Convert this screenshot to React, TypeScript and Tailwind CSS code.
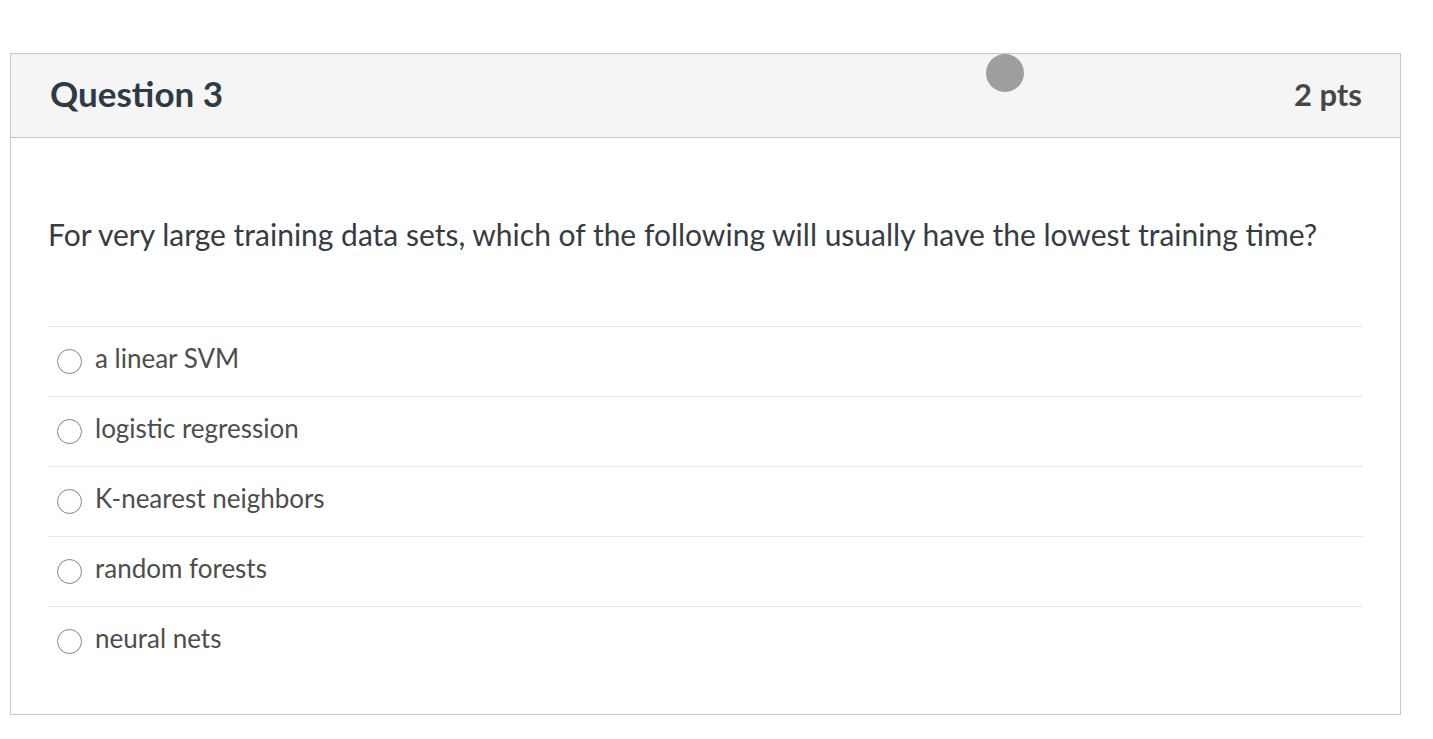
import React from 'react';

const options = [
  'a linear SVM',
  'logistic regression',
  'K-nearest neighbors',
  'random forests',
  'neural nets',
];

export default function App() {
  return (
    <div className="min-h-screen bg-white pt-[53px] pl-[10px] pr-[32px]" style={{ fontFamily: 'Lato, "Open Sans", sans-serif' }}>
      <div className="relative w-[1391px] border border-[#c7c7c7]">
        {/* Header */}
        <div className="flex h-[84px] items-center justify-between border-b border-[#c7c7c7] bg-[#f5f5f5] pl-[39px] pr-[38px]">
          <h2 className="-mt-[4px] text-[35px] font-bold text-[#2d3b45]">Question 3</h2>
          <span className="-mt-[2px] text-[31px] font-bold text-[#474747]">2 pts</span>
        </div>

        {/* cursor dot */}
        <div className="absolute left-[975px] top-[0px] h-[38px] w-[38px] rounded-full bg-[#9e9e9e]" />

        {/* Body */}
        <div className="px-[37px] pb-[38px]">
          <p className="pt-[76px] pb-[72px] text-[30px] leading-[40px] text-[#363c42]">
            For very large training data sets, which of the following will usually have the lowest training time?
          </p>
          <div>
            {options.map((o) => (
              <label key={o} className="flex h-[70px] items-center gap-[13px] border-t border-[#e8e8e8] pl-[9px]">
                <span className="mt-[0px] h-[25px] w-[25px] rounded-full border border-[#858585] bg-white" />
                <span className="-mt-[6px] text-[26px] text-[#4d4d4d]">{o}</span>
              </label>
            ))}
          </div>
        </div>
      </div>
    </div>
  );
}
